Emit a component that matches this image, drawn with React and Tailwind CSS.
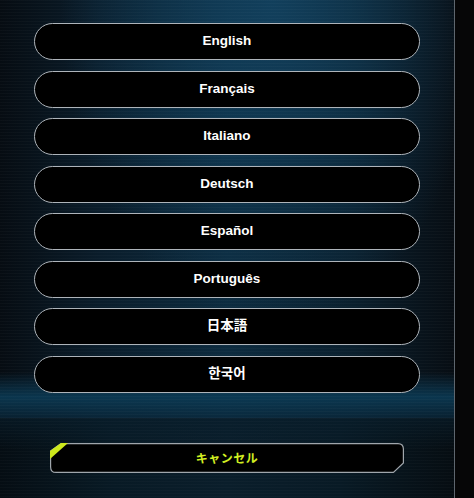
const languages = [
  'English',
  'Français',
  'Italiano',
  'Deutsch',
  'Español',
  'Português',
  '日本語',
  '한국어',
]

function CancelButton() {
  return (
    <button className="relative h-[30px] w-full flex items-center justify-center">
      {/* notched frame */}
      <svg className="absolute inset-0" width="354" height="30" viewBox="0 0 354 30">
        <path
          d="M0.6 8 L11 0.6 L348 0.6 Q353.4 0.6 353.4 6 L353.4 20 L343.4 29.4 L6 29.4 Q0.6 29.4 0.6 24 Z"
          fill="#000"
          stroke="#a0a6ac"
          strokeWidth="1.2"
        />
        <polygon points="0,8 11,0 18,0 0,16" fill="#cde81c" />
      </svg>
      <span className="relative text-[12px] font-bold tracking-[0.5px] text-[#d2ee22] font-['Noto_Sans_CJK_JP',sans-serif]">
        キャンセル
      </span>
    </button>
  )
}

export default function App() {
  return (
    <div className="w-[474px] h-[498px] flex bg-[#050607] overflow-hidden">
      <div className="w-[455px] flex flex-col border-r border-[#5e666e]">
        {/* language list */}
        <div className="h-[418px] flex flex-col gap-[10.5px] pt-[23px] px-[34px] bg-[image:repeating-linear-gradient(to_bottom,rgba(255,255,255,0.025)_0px,rgba(255,255,255,0.025)_1px,transparent_1px,transparent_3px),linear-gradient(to_bottom,transparent_0%,transparent_89%,rgba(11,58,84,0.9)_95%,rgba(9,40,60,0.7)_100%),radial-gradient(ellipse_at_60%_0%,rgba(18,66,96,0.9),transparent_55%),linear-gradient(to_right,#060c12_0%,#0a1d2b_22%,#0c2b3f_50%,#0a1f2d_78%,#070d13_100%)]">
          {languages.map((lang) => (
            <button
              key={lang}
              className="h-[37px] shrink-0 rounded-full border-[1.5px] border-[#aeb4ba] bg-black text-white text-[13.5px] font-bold font-['Liberation_Sans','Noto_Sans_CJK_JP','Noto_Sans_CJK_KR',sans-serif]"
            >
              {lang}
            </button>
          ))}
        </div>

        {/* footer */}
        <div className="flex-1 pt-[25px] px-[50px] bg-[image:repeating-linear-gradient(to_bottom,rgba(255,255,255,0.02)_0px,rgba(255,255,255,0.02)_1px,transparent_1px,transparent_3px),linear-gradient(to_bottom,rgba(8,30,44,0.6),transparent_40%),linear-gradient(to_right,#050d13_0%,#081a25_25%,#0a1e2b_50%,#081a25_75%,#060d12_100%)]">
          <CancelButton />
        </div>
      </div>
      <div className="flex-1 bg-[#060607]" />
    </div>
  )
}
